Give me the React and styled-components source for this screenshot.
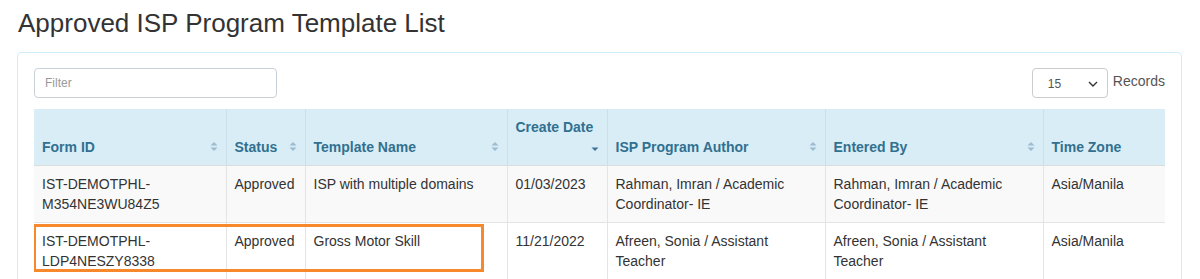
import React from 'react';
import styled, { createGlobalStyle } from 'styled-components';

const GlobalStyle = createGlobalStyle`
  html, body {
    margin: 0;
    padding: 0;
    background: #fff;
  }
  body {
    font-family: "Liberation Sans", Arial, sans-serif;
    font-size: 14px;
    color: #333;
  }
`;

const columns = [
  { key: 'id', label: 'Form ID', width: 192, sort: 'both' },
  { key: 'status', label: 'Status', width: 79, sort: 'both' },
  { key: 'name', label: 'Template Name', width: 202, sort: 'both' },
  { key: 'date', label: 'Create Date', width: 100, sort: 'desc' },
  { key: 'author', label: 'ISP Program Author', width: 218, sort: 'both' },
  { key: 'entered', label: 'Entered By', width: 218, sort: 'both' },
  { key: 'tz', label: 'Time Zone', width: 170, sort: 'none' },
];

const rows = [
  {
    id: 'IST-DEMOTPHL-M354NE3WU84Z5',
    status: 'Approved',
    name: 'ISP with multiple domains',
    date: '01/03/2023',
    author: 'Rahman, Imran / Academic Coordinator- IE',
    entered: 'Rahman, Imran / Academic Coordinator- IE',
    tz: 'Asia/Manila',
  },
  {
    id: 'IST-DEMOTPHL-LDP4NESZY8338',
    status: 'Approved',
    name: 'Gross Motor Skill',
    date: '11/21/2022',
    author: 'Afreen, Sonia / Assistant Teacher',
    entered: 'Afreen, Sonia / Assistant Teacher',
    tz: 'Asia/Manila',
  },
];

function SortIcon({ mode }) {
  if (mode === 'none') return null;
  return (
    <SortSlot>
      <svg width="8" height="11" viewBox="0 0 8 11">
        {mode === 'both' && <path d="M0.5 4.5 L4 1 L7.5 4.5 Z" fill="#9dbccf" />}
        <path d="M0.5 6.5 L4 10 L7.5 6.5 Z" fill={mode === 'desc' ? '#3e7396' : '#9dbccf'} />
      </svg>
    </SortSlot>
  );
}

function App() {
  return (
    <Page>
      <GlobalStyle />
      <Title>Approved ISP Program Template List</Title>
      <Panel>
        <Toolbar>
          <FilterInput placeholder="Filter" />
          <PageSize>
            <SelectBox>
              <span>15</span>
              <svg width="10" height="6" viewBox="0 0 10 6">
                <path d="M1 1 L5 5 L9 1" fill="none" stroke="#333" strokeWidth="1.4" />
              </svg>
            </SelectBox>
            <RecordsLabel>Records</RecordsLabel>
          </PageSize>
        </Toolbar>
        <TableWrap>
          <Table>
            <colgroup>
              {columns.map((c) => (
                <col key={c.key} style={{ width: c.width }} />
              ))}
            </colgroup>
            <thead>
              <tr>
                {columns.map((c) => (
                  <Th key={c.key}>
                    <HeadInner>
                      <span>{c.label}</span>
                      <SortIcon mode={c.sort} />
                    </HeadInner>
                  </Th>
                ))}
              </tr>
            </thead>
            <tbody>
              {rows.map((r, i) => (
                <Tr key={r.id} $striped={i % 2 === 0}>
                  {columns.map((c) => (
                    <Td key={c.key}>{r[c.key]}</Td>
                  ))}
                </Tr>
              ))}
            </tbody>
          </Table>
          <Highlight />
        </TableWrap>
      </Panel>
    </Page>
  );
}

const Page = styled.div`
  padding: 9px 18px 0 17px;
`;

const Title = styled.h1`
  margin: 0 0 14px 1px;
  font-size: 26px;
  line-height: 1.1;
  font-weight: 400;
  color: #333;
`;

const Panel = styled.div`
  border: 1px solid #cdeefa;
  border-radius: 4px;
  padding: 15px 16px 20px;
`;

const Toolbar = styled.div`
  display: flex;
  justify-content: space-between;
  align-items: flex-start;
  margin-bottom: 11px;
`;

const FilterInput = styled.input`
  box-sizing: border-box;
  width: 243px;
  height: 30px;
  border: 1px solid #c8d0d8;
  border-radius: 4px;
  padding: 0 10px;
  font-family: "Liberation Sans", Arial, sans-serif;
  font-size: 12px;
  color: #555;
  outline: none;
  &::placeholder {
    color: #999;
  }
`;

const PageSize = styled.div`
  display: flex;
  align-items: flex-start;
  gap: 5px;
`;

const SelectBox = styled.div`
  box-sizing: border-box;
  width: 76px;
  height: 30px;
  border: 1px solid #ccc;
  border-radius: 4px;
  display: flex;
  align-items: center;
  justify-content: space-between;
  padding: 2px 9px 0 15px;
  font-size: 12px;
  color: #555;
`;

const RecordsLabel = styled.span`
  padding-top: 3px;
  font-size: 14px;
  line-height: 20px;
  color: #555;
`;

const TableWrap = styled.div`
  position: relative;
  overflow: hidden;
`;

const Table = styled.table`
  border-collapse: collapse;
  table-layout: fixed;
  width: 1179px;
`;

const Th = styled.th`
  background: #d9edf7;
  color: #31708f;
  font-weight: 700;
  text-align: left;
  vertical-align: bottom;
  padding: 8px;
  line-height: 20px;
  border-bottom: 1px solid #dcdcdc;
  & + & {
    border-left: 1px solid #cddfe9;
  }
`;

const HeadInner = styled.div`
  display: flex;
  flex-wrap: wrap;
  align-items: center;
  column-gap: 4px;
`;

const SortSlot = styled.span`
  margin-left: auto;
  flex: none;
  height: 20px;
  display: flex;
  align-items: center;
`;

const Tr = styled.tr`
  background: ${(p) => (p.$striped ? '#f9f9f9' : '#fff')};
  border-bottom: 1px solid #e4e4e4;
`;

const Td = styled.td`
  padding: 8px;
  line-height: 20px;
  vertical-align: top;
  color: #333;
  & + & {
    border-left: 1px solid #e4e4e4;
  }
`;

const Highlight = styled.div`
  position: absolute;
  left: -1px;
  top: 115px;
  width: 451px;
  height: 48px;
  box-sizing: border-box;
  border: 3px solid #f7892c;
  pointer-events: none;
`;

export default App;
